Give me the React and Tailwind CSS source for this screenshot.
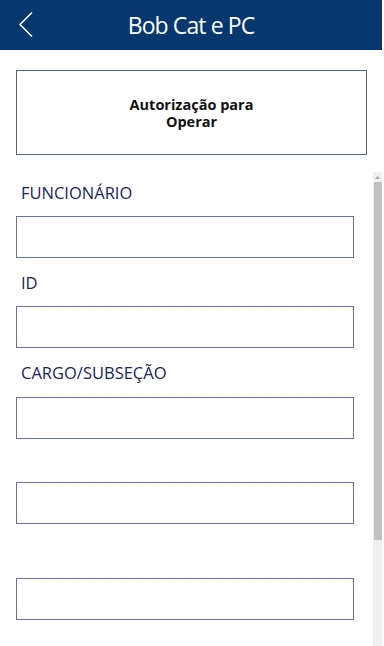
export default function App() {
  const label = "pl-[5px] text-[16.5px] leading-[22px] text-[#17245e] font-['Open_Sans',sans-serif]";
  const input = "w-[338px] h-[42px] border border-[#6470b0] bg-white";
  return (
    <div className="w-[382px] h-[646px] bg-white overflow-hidden flex flex-col font-['Open_Sans',sans-serif]">
      <header className="h-[50px] shrink-0 bg-[#06386f] grid grid-cols-[50px_1fr_50px] items-center">
        <div className="flex items-center pl-[18px]">
          <svg width="16" height="26" viewBox="0 0 16 26" fill="none">
            <path d="M13.5 1 L2 12.5 L13.5 24" stroke="white" strokeWidth="1.6" strokeLinecap="round" strokeLinejoin="round" />
          </svg>
        </div>
        <h1 className="text-center text-white text-[23px] leading-[30px] tracking-[-0.9px] font-normal">Bob Cat e PC</h1>
        <div />
      </header>
      <div className="pl-[16px] pt-[20px] shrink-0">
        <div className="w-[351px] h-[85px] border border-[#56628e] flex items-center justify-center text-center">
          <p className="font-bold text-[14.5px] leading-[17px] text-[#111]">
            Autorização para<br />Operar
          </p>
        </div>
      </div>
      <div className="flex flex-1 mt-[17px] min-h-0">
        <div className="flex-1 flex flex-col pl-[16px] pt-[10px]">
          <div className={label}>FUNCIONÁRIO</div>
          <div className={input + " mt-[12px]"} />
          <div className={label + " mt-[14px]"}>ID</div>
          <div className={input + " mt-[12px]"} />
          <div className={label + " mt-[14px]"}>CARGO/SUBSEÇÃO</div>
          <div className={input + " mt-[13px]"} />
          <div className={input + " mt-[43px]"} />
          <div className={input + " mt-[54px]"} />
        </div>
        <div className="w-[9px] bg-[#f0f0f0] flex flex-col">
          <div className="h-[10px] flex items-center justify-center">
            <svg width="5" height="3" viewBox="0 0 5 3"><path d="M0 3 L2.5 0 L5 3 Z" fill="#a3a3a3" /></svg>
          </div>
          <div className="h-[358px] ml-[1px] bg-[#c1c1c1]" />
        </div>
      </div>
    </div>
  );
}
